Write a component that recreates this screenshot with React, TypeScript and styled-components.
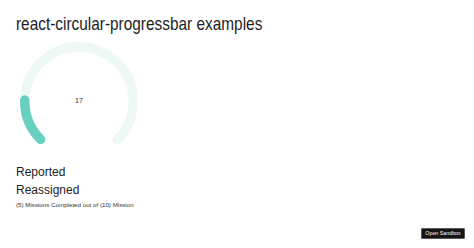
import React from "react";
import styled, { createGlobalStyle } from "styled-components";

const Global = createGlobalStyle`
  html, body { margin: 0; padding: 0; background: #ffffff; }
  body { font-family: "Liberation Sans", Arial, sans-serif; color: #222222; }
`;

const Page = styled.div`
  display: flex;
  flex-direction: column;
  align-items: flex-start;
  padding: 13px 16px 0 16px;
`;

const Title = styled.h1`
  margin: 0;
  font-family: "Liberation Sans", Arial, sans-serif;
  font-weight: 400;
  font-size: 19px;
  line-height: 22px;
  white-space: nowrap;
  color: #1e1e1e;
  transform: scaleX(0.81);
  transform-origin: left center;
`;

const Gauge = styled.svg`
  display: block;
  width: 118px;
  height: 118px;
  margin: 7px 0 0 4px;
  overflow: visible;
`;

const StatusLine = styled.div`
  font-size: 12px;
  line-height: 18.7px;
  color: #1e1e1e;
  &:first-of-type { margin-top: 2.5px; }
`;

const Note = styled.div`
  margin-top: 1px;
  font-size: 6.2px;
  line-height: 8px;
  color: #333333;
`;

const SandboxButton = styled.button`
  position: fixed;
  right: 9px;
  bottom: 9px;
  width: 44px;
  height: 11px;
  padding: 0;
  border: 1px solid #5a5a5a;
  border-radius: 1px;
  background: #151515;
  color: #ffffff;
  font-family: "Liberation Sans", Arial, sans-serif;
  font-size: 5.3px;
  line-height: 9px;
  cursor: pointer;
`;

const R = 46;
const C = 2 * Math.PI * R;
const RATIO = 0.75;

function CircularProgress({ value }: { value: number }) {
  const trailLen = C * RATIO;
  const pathLen = C * RATIO * (value / 100);
  return (
    <Gauge viewBox="0 0 100 100">
      <circle
        cx="50"
        cy="50"
        r={R}
        fill="none"
        stroke="#eef9f7"
        strokeWidth="8"
        strokeLinecap="round"
        strokeDasharray={`${trailLen} ${C}`}
        transform="rotate(135 50 50)"
      />
      <circle
        cx="50"
        cy="50"
        r={R}
        fill="none"
        stroke="#68d0c1"
        strokeWidth="8"
        strokeLinecap="round"
        strokeDasharray={`${pathLen} ${C}`}
        transform="rotate(135 50 50)"
      />
      <text
        x="50"
        y="50"
        textAnchor="middle"
        dominantBaseline="central"
        fontSize="6"
        fill="#2a2a2a"
        fontFamily="Liberation Sans, Arial, sans-serif"
      >
        {value}
      </text>
    </Gauge>
  );
}

export default function App() {
  return (
    <>
      <Global />
      <Page>
        <Title>react-circular-progressbar examples</Title>
        <CircularProgress value={17} />
        <StatusLine>Reported</StatusLine>
        <StatusLine>Reassigned</StatusLine>
        <Note>(5) Missions Completed out of (10) Mission</Note>
      </Page>
      <SandboxButton>Open Sandbox</SandboxButton>
    </>
  );
}
